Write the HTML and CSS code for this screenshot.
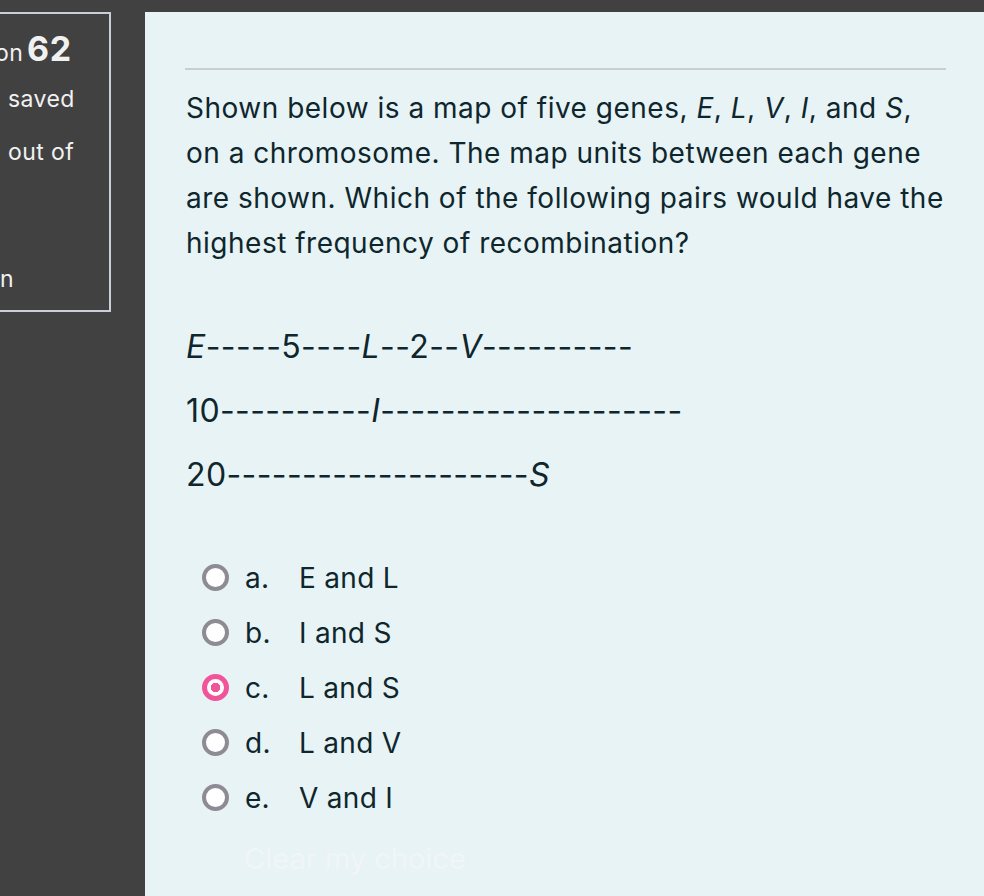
FILE: index.html
```html
<!DOCTYPE html>
<html>
<head>
<meta charset="utf-8">
<link rel="stylesheet" href="styles.css">
</head>
<body>
<div class="page">
  <aside class="sidebar">
    <div class="info">
      <div class="qno">on <b>62</b></div>
      <div class="state">saved</div>
      <div class="grade">out of</div>
      <div class="flag">n</div>
    </div>
  </aside>
  <main class="content">
    <hr class="rule">
    <p class="qtext">Shown below is a map of five genes, <i>E</i>, <i>L</i>, <i>V</i>, <i>I</i>, and <i>S</i>, on a chromosome. The map units between each gene are shown. Which of the following pairs would have the highest frequency of recombination?</p>
    <div class="map">
      <p><i>E</i>-----5----<i>L</i>--2--<i>V</i>----------</p>
      <p>10----------<i>I</i>--------------------</p>
      <p>20--------------------<i>S</i></p>
    </div>
    <div class="answers">
      <label class="opt"><span class="radio"></span><span class="num">a.</span><span class="txt">E and L</span></label>
      <label class="opt"><span class="radio"></span><span class="num">b.</span><span class="txt">I and S</span></label>
      <label class="opt"><span class="radio checked"></span><span class="num">c.</span><span class="txt">L and S</span></label>
      <label class="opt"><span class="radio"></span><span class="num">d.</span><span class="txt">L and V</span></label>
      <label class="opt"><span class="radio"></span><span class="num">e.</span><span class="txt">V and I</span></label>
    </div>
    <div class="clear">Clear my choice</div>
  </main>
</div>
</body>
</html>
```
FILE: styles.css
```css
html, body {
  margin: 0;
  padding: 0;
  background: #414141;
  height: 100%;
  overflow: hidden;
}
body {
  font-family: Inter, "Noto Sans", sans-serif;
}
.page {
  display: flex;
  padding-top: 12px;
  height: 884px;
}
.sidebar {
  width: 145px;
  flex: none;
  overflow: hidden;
}
.info {
  width: 160px;
  margin-left: -53px;
  height: 296px;
  border: 2px solid #c9ced8;
  color: #f1f1f1;
  font-size: 23px;
  letter-spacing: 0.4px;
  box-sizing: content-box;
}
.qno {
  padding-left: 46px;
  margin-top: 15px;
  height: 40px;
  line-height: 40px;
  white-space: nowrap;
  word-spacing: -3px;
}
.qno b {
  font-size: 34px;
  font-weight: 700;
  letter-spacing: 0.5px;
}
.state {
  padding-left: 59px;
  margin-top: 15px;
  line-height: 30px;
}
.grade {
  padding-left: 59px;
  margin-top: 23px;
  line-height: 30px;
}
.flag {
  padding-left: 51px;
  margin-top: 97px;
  line-height: 30px;
}
.content {
  flex: 1;
  background: #e7f3f5;
  padding: 0 38px 0 41px;
  color: #0e262c;
}
.rule {
  margin: 56px 0 0 -1px;
  border: 0;
  border-top: 2px solid #cbcdcf;
  height: 0;
}
.qtext {
  font-size: 28px;
  line-height: 45px;
  margin: 16px 0 0;
  letter-spacing: 0.5px;
}
.map {
  margin-top: 59px;
  font-size: 32px;
  letter-spacing: 0.4px;
}
.map p {
  margin: 0 0 20px;
  line-height: 44px;
}
.answers {
  margin-top: 53px;
  display: flex;
  flex-direction: column;
}
.opt {
  display: flex;
  align-items: center;
  height: 55px;
  font-size: 28px;
  letter-spacing: 0.3px;
  padding-left: 16px;
}
.radio {
  width: 19px;
  height: 19px;
  border: 4px solid #8e8b94;
  border-radius: 50%;
  background: #fff;
  flex: none;
}
.radio.checked {
  width: 17px;
  height: 17px;
  border: 5px solid #f2549a;
  background: radial-gradient(circle, #f2549a 0 4.5px, #fff 5px);
}
.num {
  margin-left: 16px;
  width: 54px;
}
.clear {
  margin-top: 16px;
  padding-left: 58px;
  font-size: 29px;
  color: #f2f5f6;
}
```
